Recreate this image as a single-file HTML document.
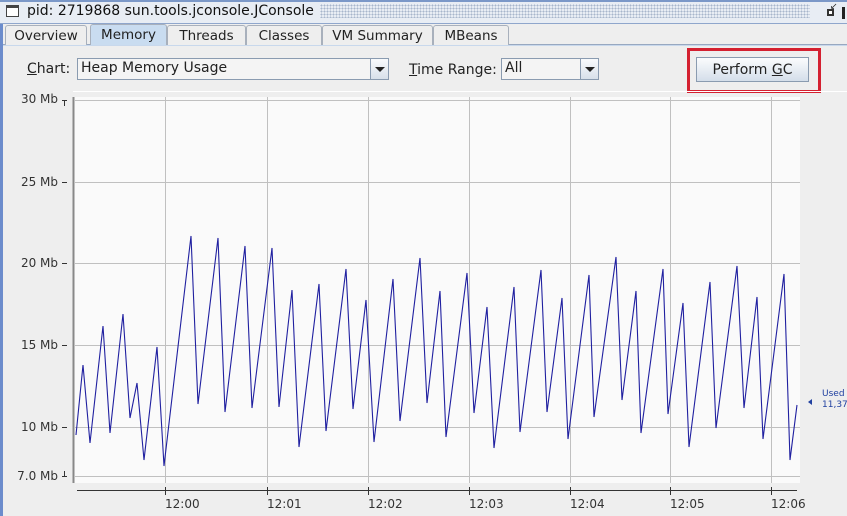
<!DOCTYPE html>
<html><head><style>
*{margin:0;padding:0;box-sizing:border-box}
body{width:847px;height:516px;background:#eeeeee;font-family:"DejaVu Sans","Liberation Sans",sans-serif;font-size:13.5px;color:#222;position:relative;overflow:hidden}
.a{position:absolute}
#title{left:0;top:0;width:847px;height:24px;background:#e8edf4;border-top:2px solid #7b98c8;border-bottom:1px solid #8fa6cc}
#dots{left:320px;top:4px;width:490px;height:14px;background-image:radial-gradient(#a8b6cc 0.9px,transparent 1px);background-size:3px 3px}
.tab{top:25px;height:20px;border:1px solid #a8b0bc;border-bottom:none;background:#eeeeee;font-size:13.5px;padding-top:2px;text-align:center;border-radius:3px 3px 0 0}
.combo{background:#f4f4f4;border:1px solid #8a9bb0;height:22px;font-size:14px;padding:1px 3px}
.arr{position:absolute;right:0;top:0;width:18px;height:20px;border-left:1px solid #8a9bb0;background:linear-gradient(#f8fafc,#d8e0ea)}
.arr:after{content:"";position:absolute;left:4px;top:8px;border-left:5px solid transparent;border-right:5px solid transparent;border-top:5px solid #222}
.yl{font-size:12px;color:#333;width:56px;text-align:right;left:2px}
.xl{font-size:12px;color:#333;top:497px}
</style></head><body>
<div class="a" style="left:0;top:0;width:3px;height:516px;background:#6c8ccc"></div>
<div class="a" id="title"></div>
<div class="a" id="dots"></div>
<div class="a" style="left:6px;top:5px;width:13px;height:12px;border:1px solid #444;background:#fff;border-top:3px solid #444"></div>
<div class="a" style="left:27px;top:3px;font-size:14px;color:#111">pid: 2719868 sun.tools.jconsole.JConsole</div>
<div class="a" style="left:827px;top:9px;width:7px;height:7px;border:2px solid #333;background:#fff"></div>
<div class="a" style="left:830px;top:2px;font-size:9px">↙</div>
<div class="a" style="left:842px;top:7px;width:3px;height:12px;background:#222"></div>
<div class="a" style="left:3px;top:44px;width:844px;height:2px;background:#c8d8ec;border-top:1px solid #98a8c0"></div>
<div class="a tab" style="left:5px;width:82px">Overview</div>
<div class="a tab" style="left:90px;width:77px;background:#c9dcf0;top:24px;height:21px">Memory</div>
<div class="a tab" style="left:167px;width:79px">Threads</div>
<div class="a tab" style="left:246px;width:76px">Classes</div>
<div class="a tab" style="left:322px;width:111px">VM Summary</div>
<div class="a tab" style="left:433px;width:76px">MBeans</div>
<div class="a" style="left:27px;top:61px;font-size:14px"><u>C</u>hart:</div>
<div class="a combo" style="left:77px;top:58px;width:312px">Heap Memory Usage<div class="arr"></div></div>
<div class="a" style="left:409px;top:62px;font-size:14px"><u>T</u>ime Range:</div>
<div class="a combo" style="left:501px;top:58px;width:98px">All<div class="arr"></div></div>
<div class="a" style="left:687px;top:48px;width:134px;height:45px;border:3px solid #d42030"></div>
<div class="a" style="left:696px;top:57px;width:113px;height:25px;border:1px solid #8a9bb0;background:linear-gradient(#fbfcfd,#d4deea);text-align:center;padding-top:4px;font-size:14px">Perform <u>G</u>C</div>
<div class="a" style="left:73px;top:91px;width:774px;height:1px;background:#fff"></div>
<svg class="a" style="left:0;top:0" width="847" height="516">
<rect x="74" y="97" width="726" height="386" fill="#fafafa"/>
<line x1="73.5" y1="97" x2="73.5" y2="483" stroke="#888" stroke-width="2"/>
<g stroke="#c0c0c0" stroke-width="1">
<line x1="165.5" y1="97" x2="165.5" y2="483"/><line x1="267.5" y1="97" x2="267.5" y2="483"/><line x1="368.5" y1="97" x2="368.5" y2="483"/><line x1="469.5" y1="97" x2="469.5" y2="483"/><line x1="570.5" y1="97" x2="570.5" y2="483"/><line x1="670.5" y1="97" x2="670.5" y2="483"/><line x1="771.5" y1="97" x2="771.5" y2="483"/>
<line x1="74" y1="100.5" x2="800" y2="100.5"/><line x1="74" y1="182.5" x2="800" y2="182.5"/><line x1="74" y1="263.5" x2="800" y2="263.5"/><line x1="74" y1="345.5" x2="800" y2="345.5"/><line x1="74" y1="427.5" x2="800" y2="427.5"/><line x1="74" y1="476.5" x2="800" y2="476.5"/>
</g>
<g stroke="#333">
<line x1="62" y1="100.5" x2="67" y2="100.5"/><line x1="64.5" y1="100" x2="64.5" y2="106"/>
<line x1="62" y1="182.5" x2="67" y2="182.5"/><line x1="62" y1="263.5" x2="67" y2="263.5"/><line x1="62" y1="345.5" x2="67" y2="345.5"/><line x1="62" y1="427.5" x2="67" y2="427.5"/><line x1="62" y1="476.5" x2="67" y2="476.5"/><line x1="64.5" y1="471" x2="64.5" y2="477"/>
<line x1="77" y1="490.5" x2="797" y2="490.5"/>
<line x1="165.5" y1="487" x2="165.5" y2="495"/><line x1="267.5" y1="487" x2="267.5" y2="495"/><line x1="368.5" y1="487" x2="368.5" y2="495"/><line x1="469.5" y1="487" x2="469.5" y2="495"/><line x1="570.5" y1="487" x2="570.5" y2="495"/><line x1="670.5" y1="487" x2="670.5" y2="495"/><line x1="771.5" y1="487" x2="771.5" y2="495"/>
</g>
<polyline fill="none" stroke="#2020a0" stroke-width="1.1" points="76,435 83,365 90,443 103,326 110,433 123,314 130,418 137,383 144,460 157,347 164,466 191,236 198,404 218,238 225,412 245,246 252,408 272,248 279,407 292,290 299,447 319,284 326,431 346,269 353,409 366,300 374,442 393,279 400,421 420,258 427,403 440,291 446,437 467,273 474,413 487,307 494,448 514,287 520,432 541,270 547,412 562,298 568,439 589,275 594,417 616,257 622,400 636,291 641,433 663,269 668,414 683,303 689,447 710,282 716,428 737,266 744,408 757,297 763,439 784,274 790,460 797,405"/>
<polygon points="808,402 812,399 812,405" fill="#2040a0"/>
</svg>
<div class="a yl" style="top:92px">30 Mb</div>
<div class="a yl" style="top:175px">25 Mb</div>
<div class="a yl" style="top:256px">20 Mb</div>
<div class="a yl" style="top:338px">15 Mb</div>
<div class="a yl" style="top:420px">10 Mb</div>
<div class="a yl" style="top:469px">7.0 Mb</div>
<div class="a xl" style="left:165px">12:00</div>
<div class="a xl" style="left:267px">12:01</div>
<div class="a xl" style="left:368px">12:02</div>
<div class="a xl" style="left:469px">12:03</div>
<div class="a xl" style="left:570px">12:04</div>
<div class="a xl" style="left:670px">12:05</div>
<div class="a xl" style="left:771px">12:06</div>
<div class="a" style="left:822px;top:389px;font-size:9px;color:#2040a0;line-height:11px">Used<br>11,37</div>
</body></html>
